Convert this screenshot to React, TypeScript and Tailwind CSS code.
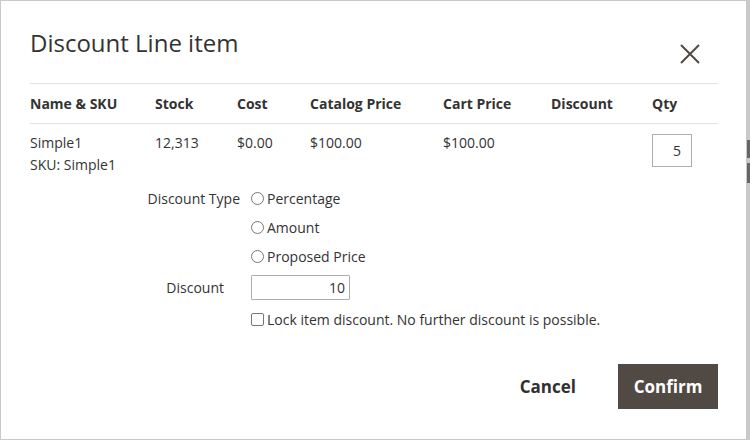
const cols = [
  { label: "Name & SKU", w: "w-[125px]" },
  { label: "Stock", w: "w-[82px]" },
  { label: "Cost", w: "w-[73px]" },
  { label: "Catalog Price", w: "w-[133px]" },
  { label: "Cart Price", w: "w-[108px]" },
  { label: "Discount", w: "w-[101px]" },
  { label: "Qty", w: "w-[66px]" },
]

const types = ["Percentage", "Amount", "Proposed Price"]

function Radio({ label }: { label: string }) {
  return (
    <label className="flex items-center h-[29px] gap-[3px]">
      <span className="w-[13px] h-[13px] rounded-full border border-[#767676] bg-white"></span>
      <span>{label}</span>
    </label>
  )
}

export default function App() {
  return (
    <div className="flex w-[750px] h-[440px] bg-[#c9c9c9] pt-px pl-px overflow-hidden" style={{ fontFamily: '"Open Sans", sans-serif' }}>
      <div className="w-[745px] h-[438px] bg-white pl-[29px] pr-[28px] text-[#333] text-[14px]">
        <div className="flex justify-between border-b border-[#e3e3e3] h-[83px]">
          <h1 className="text-[24px] pt-[26px] leading-[32px]">Discount Line item</h1>
          <button className="mt-[43px] mr-[18px] w-[20px] h-[20px] text-[#514943]">
            <svg viewBox="0 0 20 20" width="20" height="20" fill="none" stroke="currentColor" strokeWidth="2">
              <path d="M1 1L19 19M19 1L1 19" />
            </svg>
          </button>
        </div>

        <div className="flex border-b border-[#e3e3e3] h-[40px] items-center font-bold">
          {cols.map((c, i) => (
            <div key={i} className={c.w}>{c.label}</div>
          ))}
        </div>

        <div className="flex pt-[8px] leading-[22px]">
          <div className="w-[125px]">
            <div>Simple1</div>
            <div>SKU: Simple1</div>
          </div>
          <div className="w-[82px]">12,313</div>
          <div className="w-[73px]">$0.00</div>
          <div className="w-[133px]">$100.00</div>
          <div className="w-[108px]">$100.00</div>
          <div className="w-[101px]"></div>
          <div className="w-[66px] pt-[2px]">
            <div className="w-[40px] h-[33px] border border-[#adadad] flex items-center justify-end pr-[10px]">5</div>
          </div>
        </div>

        <div className="grid grid-cols-[221px_1fr] mt-[8px]">
          <div className="text-right pr-[11px] h-[29px] flex items-center justify-end">Discount Type</div>
          <div>
            {types.map((t) => (
              <Radio key={t} label={t} />
            ))}
          </div>

          <div className="text-right pr-[27px] h-[32px] flex items-center justify-end">Discount</div>
          <div className="flex items-center h-[32px]">
            <div className="w-[99px] h-[25px] border border-[#adadad] rounded-[1px] flex items-center justify-end pr-[4px]">10</div>
          </div>

          <div></div>
          <label className="flex items-center gap-[3px] h-[32px]">
            <span className="w-[13px] h-[13px] border border-[#767676] rounded-[2px]"></span>
            <span>Lock item discount. No further discount is possible.</span>
          </label>
        </div>

        <div className="flex justify-end items-center mt-[29px] gap-[42px]">
          <button className="font-bold text-[17px] text-[#303030]">Cancel</button>
          <button className="w-[100px] h-[45px] bg-[#514943] text-white font-bold text-[17px]">Confirm</button>
        </div>
      </div>

      <div className="flex-1 flex flex-col pt-[139px] pl-px gap-[5px]">
        <div className="h-[18px] bg-[#666]"></div>
        <div className="h-[20px] bg-[#666]"></div>
      </div>
    </div>
  )
}
